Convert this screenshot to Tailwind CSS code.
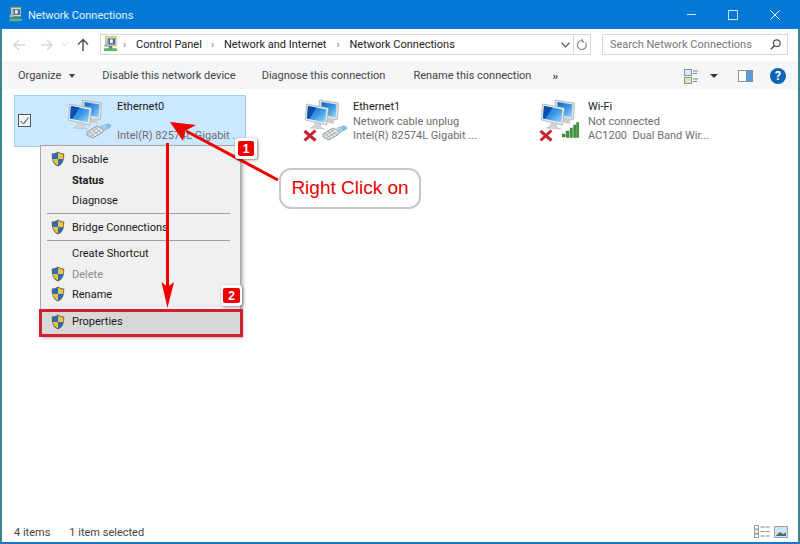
<!DOCTYPE html>
<html lang="en">
  <head>
    <meta charset="UTF-8" />
    <title>Network Connections</title>
    <script src="https://cdn.jsdelivr.net/npm/@tailwindcss/browser@4"></script>
  </head>
  <body class="relative w-[800px] h-[544px] overflow-hidden bg-white font-['Roboto',sans-serif] text-[11px] text-[#333]">
    <!-- icon sprites -->
    <svg class="absolute w-0 h-0">
      <defs>
        <linearGradient id="screen" x1="0" y1="0" x2="1" y2="1">
          <stop offset="0" stop-color="#0d5fc4" />
          <stop offset="0.55" stop-color="#3d9be8" />
          <stop offset="1" stop-color="#a8dcf5" />
        </linearGradient>
        <linearGradient id="plug" x1="0" y1="0" x2="1" y2="0">
          <stop offset="0" stop-color="#d5dade" />
          <stop offset="1" stop-color="#5fb8d8" />
        </linearGradient>
      </defs>
      <symbol id="pc" viewBox="0 0 36 32">
        <path d="M15 1 L34 4 L33 20 L30 21 L14 17Z" fill="#dfe3e6" stroke="#9aa3aa" stroke-width=".7" />
        <path d="M17 3 L32 5.5 L31 18.5 L17 15Z" fill="url(#screen)" />
        <path d="M24 19 L29 21 L30 25 L21 23Z" fill="#c9cdd0" />
        <path d="M2 5 L24 9 L22 26 L1 21Z" fill="#eceef0" stroke="#9aa3aa" stroke-width=".7" />
        <path d="M3.5 7 L22 10.5 L20.5 23.5 L2.5 19.5Z" fill="url(#screen)" />
        <path d="M3.5 7 L12 8.6 L5 19.8 L2.5 19.5Z" fill="#0a4fae" />
        <path d="M11 23 L16 24.5 L16 28 L20 30 L6 29 L10 26.5Z" fill="#d3d6d9" stroke="#aab0b5" stroke-width=".5" />
      </symbol>
      <symbol id="cable" viewBox="0 0 26 16">
        <path d="M1 9 L11 3 L17 6 L17 9 L7 15 L1 12Z" fill="#e4e7ea" stroke="#7d878f" stroke-width=".8" />
        <path d="M3 8 L9 14 M6 6 L12 12 M9 4.5 L15 10 M2 11 L12 5 M4 13 L15 7" stroke="#8c959c" stroke-width=".6" fill="none" />
        <path d="M15 3 L22 .8 L25 2.5 L24.5 4 L18 7.5Z" fill="url(#plug)" stroke="#6eb2cc" stroke-width=".6" />
      </symbol>
      <symbol id="redx" viewBox="0 0 14 13">
        <path d="M1.5 2 L12.5 11.5 M12.5 1.5 L1.5 11.5" stroke="#c8232c" stroke-width="3" fill="none" />
      </symbol>
      <symbol id="shield" viewBox="0 0 14 16">
        <path d="M7 .5 C5 2 3 2.5 .8 2.5 C.6 8 1.5 13 7 15.5 C12.5 13 13.4 8 13.2 2.5 C11 2.5 9 2 7 .5Z" fill="#555f6b" />
        <path d="M7 1.6 L7 8 L1.8 8 C1.6 6.5 1.6 5 1.7 3.4 C3.5 3.3 5.4 2.8 7 1.6Z" fill="#2a6db5" />
        <path d="M7 1.6 C8.6 2.8 10.5 3.3 12.3 3.4 C12.4 5 12.4 6.5 12.2 8 L7 8Z" fill="#f2c23f" />
        <path d="M1.8 8 L7 8 L7 14.4 C3.6 12.8 2.2 10.6 1.8 8Z" fill="#f2c23f" />
        <path d="M7 8 L12.2 8 C11.8 10.6 10.4 12.8 7 14.4Z" fill="#2a6db5" />
      </symbol>
      <symbol id="folderpc" viewBox="0 0 16 18">
        <rect x="3" y="0.5" width="11" height="10" fill="#f3d98a" stroke="#a89a5c" stroke-width=".6" />
        <rect x="5" y="2.5" width="8" height="6.5" fill="#3470b8" />
        <rect x="7.5" y="3.5" width="3" height="4" fill="#f0f4f8" />
        <path d="M1 10 L6 4 L6 11 L2 12Z" fill="#9fb5c9" />
        <rect x="1" y="13" width="14" height="3" fill="#58b868" />
        <rect x="6" y="10.5" width="4" height="3" fill="#6f7b86" />
      </symbol>
    </svg>

    <div class="w-full h-full flex flex-col border-x-2 border-x-[#3b8493] border-b-2 border-b-[#1979c8]">
      <!-- title bar -->
      <div class="h-[29px] -mx-[2px] flex items-center bg-[#0478d6] pl-[8px] text-white/90">
        <svg class="w-[15px] h-[16px]"><use href="#folderpc" /></svg>
        <span class="ml-[5px] mt-[3px]">Network Connections</span>
        <div class="ml-auto flex items-center pr-[2px]">
          <div class="w-[42px] h-[29px] flex items-center justify-center">
            <div class="w-[9px] h-px bg-white/80"></div>
          </div>
          <div class="w-[42px] h-[29px] flex items-center justify-center">
            <div class="w-[10px] h-[10px] border border-white/80"></div>
          </div>
          <div class="w-[42px] h-[29px] flex items-center justify-center">
            <svg class="w-[10px] h-[10px] text-white" viewBox="0 0 10 10"><path d="M.5 .5 L9.5 9.5 M9.5 .5 L.5 9.5" stroke="currentColor" fill="none" /></svg>
          </div>
          <div class="w-[2px]"></div>
        </div>
      </div>

      <!-- address row -->
      <div class="h-[32px] flex items-center pb-px">
        <div class="w-[98px] flex items-center">
          <svg class="ml-[11px] w-[13px] h-[12px] text-[#d4d4d4]" viewBox="0 0 13 12"><path d="M1 6 H12 M6 1 L1 6 L6 11" stroke="currentColor" stroke-width="1.4" fill="none" /></svg>
          <svg class="ml-[14px] w-[13px] h-[12px] text-[#d4d4d4]" viewBox="0 0 13 12"><path d="M1 6 H12 M7 1 L12 6 L7 11" stroke="currentColor" stroke-width="1.4" fill="none" /></svg>
          <svg class="ml-[8px] w-[7px] h-[5px] text-[#d4d4d4]" viewBox="0 0 7 5"><path d="M.5 .5 L3.5 4 L6.5 .5" stroke="currentColor" fill="none" /></svg>
          <svg class="ml-[9px] w-[12px] h-[13px] text-[#555]" viewBox="0 0 12 13"><path d="M6 13 V1.5 M1 6.5 L6 1.5 L11 6.5" stroke="currentColor" stroke-width="1.5" fill="none" /></svg>
        </div>
        <div class="w-[491px] h-[21px] flex items-center border border-[#d9d9d9] bg-white">
          <svg class="ml-[2px] w-[15px] h-[17px]"><use href="#folderpc" /></svg>
          <span class="ml-[5px] text-[#777] text-[10px]">›</span>
          <span class="ml-[10px] mt-[2px] text-[#222]">Control Panel</span>
          <span class="ml-[9px] text-[#777] text-[10px]">›</span>
          <span class="ml-[10px] mt-[2px] text-[#222]">Network and Internet</span>
          <span class="ml-[10px] text-[#777] text-[10px]">›</span>
          <span class="ml-[10px] mt-[2px] text-[#222]">Network Connections</span>
          <div class="ml-auto flex items-center h-full">
            <svg class="w-[9px] h-[6px] mr-[3px] text-[#666]" viewBox="0 0 9 6"><path d="M.5 .5 L4.5 5 L8.5 .5" stroke="currentColor" stroke-width="1.2" fill="none" /></svg>
            <div class="w-px h-full bg-[#d9d9d9]"></div>
            <svg class="w-[12px] h-[13px] mx-[2px] text-[#888]" viewBox="0 0 12 13"><path d="M9.6 4.5 A4.5 4.5 0 1 1 6 2.5 L6 .5 M6 2.5 L8 4.5" stroke="currentColor" stroke-width="1.2" fill="none" /></svg>
          </div>
        </div>
        <div class="ml-[11px] w-[186px] h-[21px] flex items-center border border-[#d9d9d9] bg-white pl-[7px] text-[#777]">
          <span class="mt-[2px]">Search Network Connections</span>
          <svg class="ml-auto mr-[6px] w-[11px] h-[11px] text-[#555]" viewBox="0 0 11 11"><circle cx="6.8" cy="4.2" r="3.3" stroke="currentColor" stroke-width="1.2" fill="none" /><path d="M4.3 6.7 L.8 10.2" stroke="currentColor" stroke-width="1.6" /></svg>
        </div>
      </div>

      <!-- command bar -->
      <div class="h-[28px] flex items-center bg-[#f5f6f7] text-[#444] pt-[2px]">
        <span class="ml-[16px]">Organize</span>
        <span class="ml-[8px] w-0 h-0 border-x-[3.5px] border-x-transparent border-t-[4px] border-t-[#444]"></span>
        <span class="ml-[27px]">Disable this network device</span>
        <span class="ml-[26px]">Diagnose this connection</span>
        <span class="ml-[28px]">Rename this connection</span>
        <span class="ml-[21px] text-[11px] font-bold leading-none tracking-[-1px]">››</span>
        <div class="ml-auto flex items-center">
          <svg class="w-[14px] h-[15px]" viewBox="0 0 14 15">
            <rect x=".5" y=".5" width="7" height="6" fill="#dfeaf5" stroke="#7c93aa" />
            <rect x=".5" y="8.5" width="7" height="6" fill="#d9e8c4" stroke="#8a9a6c" />
            <path d="M9 2 H14 M9 4.5 H13 M9 10 H14 M9 12.5 H13" stroke="#7c8790" fill="none" />
          </svg>
          <span class="ml-[12px] w-0 h-0 border-x-[4px] border-x-transparent border-t-[4px] border-t-[#333]"></span>
          <div class="ml-[20px] w-[15px] h-[12px] flex border border-[#8a8f94] bg-white">
            <div class="ml-auto w-[6px] bg-[#5b9bd5]"></div>
          </div>
          <div class="ml-[17px] mr-[12px] w-[16px] h-[16px] rounded-full bg-[#1063b5] flex items-center justify-center text-white font-bold text-[12px] leading-none">?</div>
        </div>
      </div>

      <!-- connections list -->
      <div class="flex-1 grid grid-cols-[236px_236px_236px] content-start pl-[12px] pt-[6px]">
        <div class="relative w-[232px] h-[52px] flex bg-[#cce8ff] border border-[#99d1ff] pl-[52px]">
          <span class="absolute left-[3px] top-[18px] w-[13px] h-[13px] border border-[#555] bg-white/70 flex items-center justify-center">
            <svg class="w-[9px] h-[8px]" viewBox="0 0 9 8"><path d="M.5 4 L3.5 7 L8.5 .5" stroke="#333" fill="none" /></svg>
          </span>
          <div class="relative w-[50px] h-[48px] shrink-0">
            <svg class="absolute left-[0px] top-[3px] w-[37px] h-[32px]"><use href="#pc" /></svg>
            <svg class="absolute left-[19px] top-[27px] w-[26px] h-[16px]"><use href="#cable" /></svg>
          </div>
          <div class="flex flex-col pt-[4px] leading-[14.5px] text-[#6d6d6d] whitespace-nowrap">
            <span class="text-[#1a1a1a]">Ethernet0</span>
            <span class="h-[14.5px]"></span>
            <span>Intel(R) 82574L Gigabit ...</span>
          </div>
        </div>
        <div class="w-[232px] h-[52px] flex pl-[53px] pt-px">
          <div class="relative w-[50px] h-[48px] shrink-0">
            <svg class="absolute left-[1px] top-[3px] w-[37px] h-[32px]"><use href="#pc" /></svg>
            <svg class="absolute left-[19px] top-[29px] w-[26px] h-[16px]"><use href="#cable" /></svg>
            <svg class="absolute left-0 top-[33px] w-[14px] h-[13px]"><use href="#redx" /></svg>
          </div>
          <div class="flex flex-col pt-[4px] leading-[14.5px] text-[#6d6d6d] whitespace-nowrap">
            <span class="text-[#1a1a1a]">Ethernet1</span>
            <span>Network cable unplug</span>
            <span>Intel(R) 82574L Gigabit ...</span>
          </div>
        </div>
        <div class="w-[232px] h-[52px] flex pl-[53px] pt-px">
          <div class="relative w-[49px] h-[48px] shrink-0">
            <svg class="absolute left-[1px] top-[3px] w-[37px] h-[32px]"><use href="#pc" /></svg>
            <svg class="absolute left-[23px] top-[26px] w-[17px] h-[16px]" viewBox="0 0 17 16">
              <path d="M0 15 H3 V12 H0Z M4 15.5 H7 V9 H4Z M8 15.5 H10.5 V6 H8Z M11.5 15.5 H14 V3 H11.5Z M14.5 15.5 H17 V.5 H14.5Z" fill="#3f9a46" stroke="#25702c" stroke-width=".4" />
            </svg>
            <svg class="absolute left-0 top-[33px] w-[14px] h-[13px]"><use href="#redx" /></svg>
          </div>
          <div class="flex flex-col pt-[4px] leading-[14.5px] text-[#6d6d6d] whitespace-nowrap">
            <span class="text-[#1a1a1a]">Wi-Fi</span>
            <span>Not connected</span>
            <span>AC1200&nbsp; Dual Band Wir...</span>
          </div>
        </div>
      </div>

      <!-- status bar -->
      <div class="h-[21px] flex items-center pl-[12px] text-[#444]">
        <span class="mt-[4px]">4 items</span>
        <span class="ml-[19px] mt-[4px]">1 item selected</span>
        <div class="ml-auto mr-[10px] flex items-center gap-[3px]">
          <svg class="w-[17px] h-[13px]" viewBox="0 0 17 13">
            <rect x=".5" y=".5" width="4" height="3.4" fill="#fff" stroke="#999" />
            <rect x=".5" y="4.8" width="4" height="3.4" fill="#fff" stroke="#999" />
            <rect x=".5" y="9.1" width="4" height="3.4" fill="#fff" stroke="#999" />
            <path d="M6.5 2 H16 M6.5 6.5 H16 M6.5 11 H16" stroke="#888" stroke-dasharray="4 1" fill="none" />
          </svg>
          <svg class="w-[14px] h-[12px]" viewBox="0 0 14 12">
            <rect x=".5" y=".5" width="13" height="11" fill="#cfe4f3" stroke="#8ea3b3" />
            <path d="M2 9.5 L6 6 L9 8 L12 6.5 V10 H2Z" fill="#4f6f50" />
          </svg>
        </div>
      </div>
    </div>

    <!-- context menu -->
    <div class="absolute left-[40px] top-[145px] w-[201px] h-[191px] flex flex-col bg-[#f0f0f0] border border-[#a8a8a8] shadow-[2px_2px_3px_rgba(0,0,0,0.3)] pt-[3px] text-[#1a1a1a]">
      <div class="h-[20.5px] flex items-center pl-[31px]">
        <svg class="w-[14px] h-[16px] mr-[7px] -ml-[21px]"><use href="#shield" /></svg>
        <span class="mt-[2px]">Disable</span>
      </div>
      <div class="h-[20.5px] flex items-center pl-[31px] pt-[2px] font-bold">Status</div>
      <div class="h-[20.5px] flex items-center pl-[31px] pt-[2px]">Diagnose</div>
      <div class="h-[6px] flex items-center pl-[6px] pr-[10px]"><div class="w-full h-px bg-[#a0a0a0]"></div></div>
      <div class="h-[20.5px] flex items-center pl-[31px]">
        <svg class="w-[14px] h-[16px] mr-[7px] -ml-[21px]"><use href="#shield" /></svg>
        <span class="mt-[2px]">Bridge Connections</span>
      </div>
      <div class="h-[6px] flex items-center pl-[6px] pr-[10px]"><div class="w-full h-px bg-[#a0a0a0]"></div></div>
      <div class="h-[20.5px] flex items-center pl-[31px] pt-[2px]">Create Shortcut</div>
      <div class="h-[20.5px] flex items-center pl-[31px] text-[#8c8c8c]">
        <svg class="w-[14px] h-[16px] mr-[7px] -ml-[21px]"><use href="#shield" /></svg>
        <span class="mt-[2px]">Delete</span>
      </div>
      <div class="h-[20.5px] flex items-center pl-[31px]">
        <svg class="w-[14px] h-[16px] mr-[7px] -ml-[21px]"><use href="#shield" /></svg>
        <span class="mt-[2px]">Rename</span>
      </div>
      <div class="absolute -left-[2px] right-[-3px] top-[163px] h-[28px] flex items-center bg-[#d8d8d8] border-[3px] border-[#d0202f] pl-[30px] pb-[3px]">
        <svg class="w-[14px] h-[16px] mr-[7px] -ml-[21px]"><use href="#shield" /></svg>
        <span class="mt-[2px]">Properties</span>
      </div>
    </div>

    <!-- red annotation arrows -->
    <svg class="absolute left-0 top-0 w-[800px] h-[544px] pointer-events-none" viewBox="0 0 800 544">
      <path d="M167.5 143 V290" stroke="#f00000" stroke-width="3" fill="none" />
      <path d="M167.5 308 L161.5 282 L167.5 287 L174 282Z" fill="#f00000" />
      <path d="M278 180 L186 131" stroke="#f00000" stroke-width="3" fill="none" />
      <path d="M170 122 L196 125 L185 131 L183 141Z" fill="#f00000" />
    </svg>

    <!-- step badges -->
    <div class="absolute left-[235px] top-[138px] w-[22px] h-[21px] flex items-center justify-center rounded-[3px] bg-white shadow-[1px_1px_3px_rgba(0,0,0,0.5)]">
      <span class="w-[16px] h-[15px] flex items-center justify-center rounded-[2px] bg-[#ee0000] text-white font-['Liberation_Sans',sans-serif] font-bold text-[12px] leading-none">1</span>
    </div>
    <div class="absolute left-[221px] top-[285px] w-[21px] h-[21px] flex items-center justify-center rounded-[3px] bg-white shadow-[1px_1px_3px_rgba(0,0,0,0.4)]">
      <span class="w-[17px] h-[15px] flex items-center justify-center rounded-[2px] bg-[#ee0000] text-white font-['Liberation_Sans',sans-serif] font-bold text-[12px] leading-none">2</span>
    </div>

    <!-- callout -->
    <div class="absolute left-[279px] top-[168px] w-[142px] h-[41px] flex items-center justify-center rounded-[12px] border-2 border-[#c8c8c8] bg-white font-['Liberation_Sans',sans-serif] text-[19px] text-[#f00000]">Right Click on</div>
  </body>
</html>
